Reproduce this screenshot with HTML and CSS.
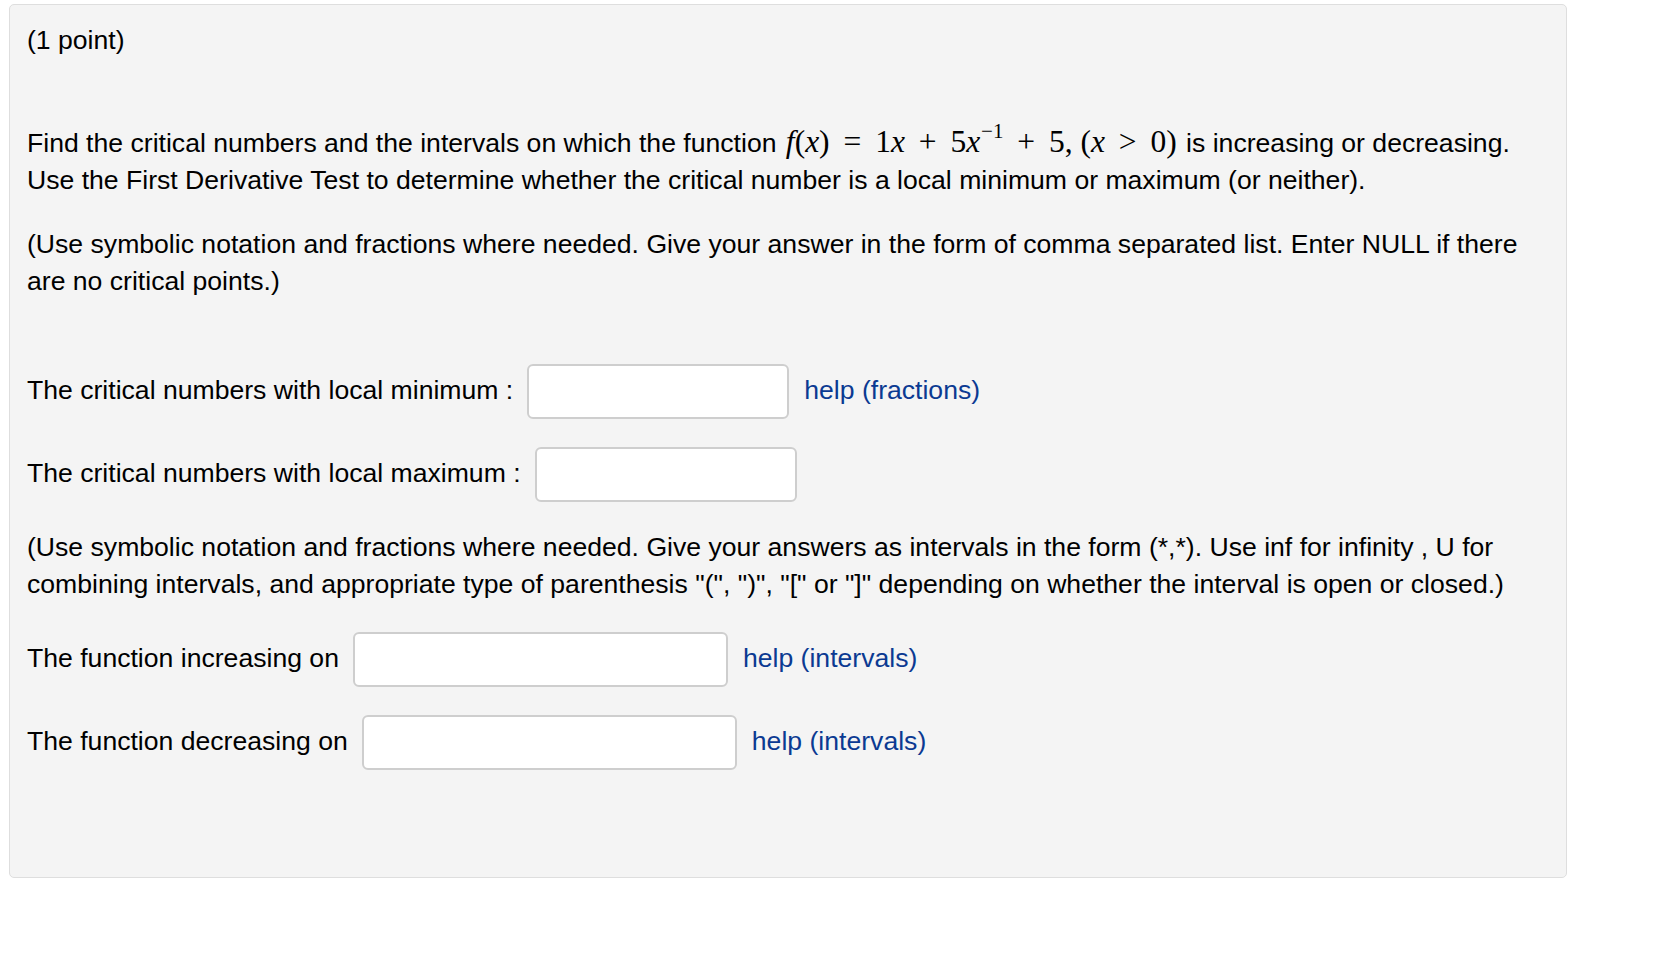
FILE: index.html
```html
<!DOCTYPE html>
<html lang="en">
   <head>
      <meta charset="UTF-8">
      <meta name="viewport" content="width=device-width, initial-scale=1.0">
      <title>Problem</title>
      <link rel="stylesheet" href="styles.css">
   </head>

   <body>
      <div class="problem">
         <p class="points">(1 point)</p>

         <!-------------QUESTION TEXT------------->
         <p class="intro">
            Find the critical numbers and the intervals on which the function
            <span class="math"><i>f</i>(<i>x</i>) <span class="op">=</span> 1<i>x</i> <span class="op">+</span> 5<i>x</i><sup>&minus;1</sup> <span class="op">+</span> 5, (<i>x</i> <span class="op">&gt;</span> 0)</span>
            is increasing or decreasing.<br>
            Use the First Derivative Test to determine whether the critical number is a local minimum or maximum (or neither).
         </p>

         <p class="note">(Use symbolic notation and fractions where needed. Give your answer in the form of comma separated list. Enter NULL if there are no critical points.)</p>

         <!-------------CRITICAL NUMBERS---------->
         <div class="answer first">
            <span>The critical numbers with local minimum :</span>
            <input type="text" class="answer-box small">
            <a href="#" class="help">help (fractions)</a>
         </div>
         <div class="answer">
            <span>The critical numbers with local maximum :</span>
            <input type="text" class="answer-box small">
         </div>

         <p class="note intervals">(Use symbolic notation and fractions where needed. Give your answers as intervals in the form (*,*). Use inf for infinity , U for combining intervals, and appropriate type of parenthesis "(", ")", "[" or "]" depending on whether the interval is open or closed.)</p>

         <!-------------INTERVALS----------------->
         <div class="answer">
            <span>The function increasing on</span>
            <input type="text" class="answer-box wide">
            <a href="#" class="help">help (intervals)</a>
         </div>
         <div class="answer">
            <span>The function decreasing on</span>
            <input type="text" class="answer-box wide">
            <a href="#" class="help">help (intervals)</a>
         </div>
      </div>
   </body>
</html>
```

FILE: styles.css
```css
*{
   box-sizing: border-box;
   margin: 0;
   padding: 0;
}

body{
   background: #fff;
   font-family: "Liberation Sans", Arial, sans-serif;
   font-size: 26.6px;
   line-height: 37.5px;
   color: #000;
}

.problem{
   width: 1558px;
   height: 874px;
   margin: 4px 0 0 9px;
   padding: 17px 18px 0 17px;
   background: #f4f4f4;
   border: 1px solid #dedede;
   border-radius: 5px;
}

.intro{
   margin-top: 63px;
}

.note{
   margin-top: 26px;
}

.note.intervals{
   margin-top: 27px;
}

.math{
   font-family: "Liberation Serif", "Times New Roman", serif;
   font-size: 31.5px;
   margin: 0 2px;
}

.math .op{
   margin: 0 6px;
}

.math sup{
   font-size: 21px;
   line-height: 0;
   vertical-align: 14px;
   margin-left: 1px;
}

.answer{
   display: flex;
   align-items: center;
   margin-top: 28px;
}

.answer.first{
   margin-top: 63px;
}

.answer span{
   margin-right: 14px;
}

.answer-box{
   height: 55px;
   background: #fff;
   border: 2px solid #cecece;
   border-radius: 6px;
   font-size: 24px;
   padding: 0 10px;
}

.answer-box.small{
   width: 262px;
}

.answer-box.wide{
   width: 375px;
}

.help{
   margin-left: 15px;
   color: #0b3a92;
   text-decoration: none;
}
```
